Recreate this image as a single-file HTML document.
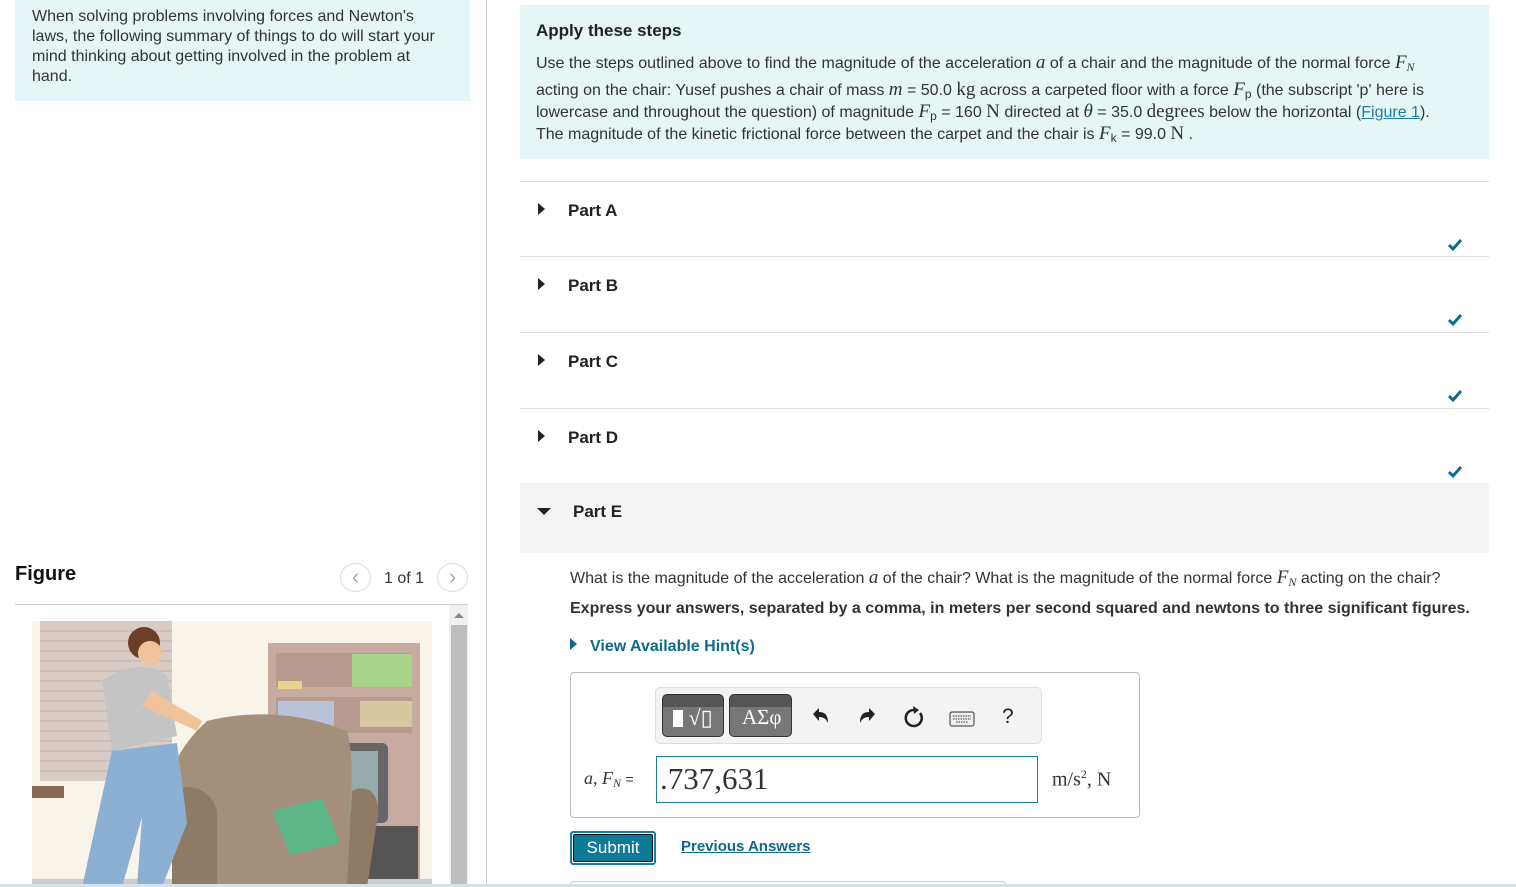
<!DOCTYPE html>
<html><head><style>
*{margin:0;padding:0;box-sizing:border-box}
body{width:1516px;height:887px;overflow:hidden;background:#fff;font-family:"Liberation Sans",Arial,sans-serif;color:#333;position:relative;font-size:16px}
.abs{position:absolute;white-space:nowrap}
.m{font-family:"Liberation Serif",serif;font-style:italic;font-size:19px}
.r{font-family:"Liberation Serif",serif;font-size:19px}
sub{font-size:12px;line-height:0;vertical-align:-3px}
.part{position:absolute;left:520px;width:969px;border-top:1px solid #ddd;height:76px}
.part b{position:absolute;left:48px;top:19px;font-size:17px;color:#222}
.tri{position:absolute;left:18px;top:21px;width:0;height:0;border-top:6px solid transparent;border-bottom:6px solid transparent;border-left:7px solid #222}
.chk{position:absolute;right:26px;top:56px}
.ln{position:absolute;left:536px;font-size:16px;line-height:20px;white-space:nowrap}
</style></head><body>
<div class="abs" style="left:15px;top:0;width:455px;height:101px;background:#e6f5f6"></div>
<div class="abs" style="left:32px;top:7px;width:420px;font-size:16px;line-height:20px;color:#333;white-space:normal">When solving problems involving forces and Newton's laws, the following summary of things to do will start your mind thinking about getting involved in the problem at hand.</div>
<div class="abs" style="left:486px;top:0;width:1px;height:887px;background:#ccc"></div>

<div class="abs" style="left:520px;top:5px;width:969px;height:154px;background:#e6f5f6"></div>
<div class="abs" style="left:536px;top:21px;font-size:17px;font-weight:bold;color:#222">Apply these steps</div>
<div class="ln" style="top:53px">Use the steps outlined above to find the magnitude of the acceleration <span class="m">a</span> of a chair and the magnitude of the normal force <span class="m">F<sub>N</sub></span></div>
<div class="ln" style="top:80px">acting on the chair: Yusef pushes a chair of mass <span class="m">m</span> = 50.0 <span class="r">kg</span> across a carpeted floor with a force <span class="m">F</span><sub>p</sub> (the subscript 'p' here is</div>
<div class="ln" style="top:102px">lowercase and throughout the question) of magnitude <span class="m">F</span><sub>p</sub> = 160 <span class="r">N</span> directed at <span class="m">θ</span> = 35.0 <span class="r">degrees</span> below the horizontal (<span style="color:#1a7ea0;text-decoration:underline">Figure 1</span>).</div>
<div class="ln" style="top:124px">The magnitude of the kinetic frictional force between the carpet and the chair is <span class="m">F</span><sub>k</sub> = 99.0 <span class="r">N</span> .</div>

<div class="part" style="top:181px"><div class="tri"></div><b>Part A</b><svg class="chk" width="16" height="14"><path d="M2 7l4 4 8-9" stroke="#0d6a8a" stroke-width="3" fill="none"/></svg></div>
<div class="part" style="top:256px"><div class="tri"></div><b>Part B</b><svg class="chk" width="16" height="14"><path d="M2 7l4 4 8-9" stroke="#0d6a8a" stroke-width="3" fill="none"/></svg></div>
<div class="part" style="top:332px"><div class="tri"></div><b>Part C</b><svg class="chk" width="16" height="14"><path d="M2 7l4 4 8-9" stroke="#0d6a8a" stroke-width="3" fill="none"/></svg></div>
<div class="part" style="top:408px"><div class="tri"></div><b>Part D</b><svg class="chk" width="16" height="14"><path d="M2 7l4 4 8-9" stroke="#0d6a8a" stroke-width="3" fill="none"/></svg></div>
<div class="abs" style="left:520px;top:483px;width:969px;height:70px;background:#f5f5f5"></div>
<div class="abs" style="left:537px;top:508px;width:0;height:0;border-left:7px solid transparent;border-right:7px solid transparent;border-top:7px solid #222"></div>
<div class="abs" style="left:573px;top:502px;font-size:17px;font-weight:bold;color:#222">Part E</div>

<div class="abs" style="left:570px;top:567px;font-size:16px">What is the magnitude of the acceleration <span class="m">a</span> of the chair? What is the magnitude of the normal force <span class="m">F<sub>N</sub></span> acting on the chair?</div>
<div class="abs" style="left:570px;top:600px;font-size:16px;font-weight:bold;color:#333">Express your answers, separated by a comma, in meters per second squared and newtons to three significant figures.</div>
<div class="abs" style="left:570px;top:638px;width:0;height:0;border-top:6px solid transparent;border-bottom:6px solid transparent;border-left:7px solid #0d6a8a"></div>
<div class="abs" style="left:590px;top:638px;font-size:16px;font-weight:bold;color:#0d6a8a">View Available Hint(s)</div>

<div class="abs" style="left:570px;top:672px;width:570px;height:146px;border:1px solid #bbb;border-radius:4px"></div>
<div class="abs" style="left:655px;top:687px;width:387px;height:57px;background:#f3f3f3;border:1px solid #ddd;border-radius:5px"></div>
<div class="abs" style="left:662px;top:694px;width:62px;height:43px;background:linear-gradient(#555 0,#555 12px,#777 12px);border:1px solid #333;border-radius:5px;color:#fff;font-family:'Liberation Serif',serif;font-size:22px;padding:10px 0 0 10px"><span style="display:inline-block;width:10px;height:17px;background:#fff;vertical-align:-2px"></span> √▯</div>
<div class="abs" style="left:729px;top:694px;width:63px;height:43px;background:linear-gradient(#555 0,#555 12px,#777 12px);border:1px solid #333;border-radius:5px;color:#fff;font-family:'Liberation Serif',serif;font-size:21px;padding:10px 0 0 12px">ΑΣφ</div>
<svg class="abs" style="left:810px;top:706px" width="20" height="20"><path d="M3 8l6-6v4c6 0 9 3 9 11c-2-4-4-6-9-6v4z" fill="#222"/></svg>
<svg class="abs" style="left:858px;top:706px" width="20" height="20"><path d="M17 8l-6-6v4c-6 0-9 3-9 11c2-4 4-6 9-6v4z" fill="#222"/></svg>
<svg class="abs" style="left:903px;top:706px" width="22" height="22"><path d="M17 7a8 8 0 1 1-6-3" stroke="#222" stroke-width="2.5" fill="none"/><path d="M10 0l6 4-5 4z" fill="#222"/></svg>
<svg class="abs" style="left:949px;top:711px" width="26" height="16"><rect x="1" y="1" width="24" height="14" rx="2" fill="#eee" stroke="#333"/><path d="M4 5h18M4 8h18M7 11h12" stroke="#333" stroke-dasharray="1.5 1"/></svg>
<div class="abs" style="left:1002px;top:705px;font-size:21px;color:#222">?</div>

<div class="abs" style="left:584px;top:768px;font-family:'Liberation Serif',serif;font-size:18px;color:#333"><i>a</i>, <i>F<sub>N</sub></i> <span style="font-family:'Liberation Sans';font-size:14px">=</span></div>
<div class="abs" style="left:656px;top:756px;width:382px;height:47px;border:1px solid #1a7ea0"></div>
<div class="abs" style="left:660px;top:761px;font-family:'Liberation Serif',serif;font-size:31px;color:#333">.737,631</div>
<div class="abs" style="left:1052px;top:767px;font-family:'Liberation Serif',serif;font-size:20px;color:#333">m/s<sup style="font-size:12px">2</sup>, N</div>

<div class="abs" style="left:570px;top:831px;width:86px;height:34px;border:2px solid #1a7ea0;border-radius:3px;padding:1px"><div style="width:100%;height:100%;background:#0d7a96;border:1px solid #111;border-radius:2px;color:#fff;font-size:17px;text-align:center;line-height:26px">Submit</div></div>
<div class="abs" style="left:681px;top:838px;font-size:15px;font-weight:bold;color:#0d6a8a;text-decoration:underline">Previous Answers</div>
<div class="abs" style="left:570px;top:881px;width:436px;height:6px;border:1px solid #ccc;border-bottom:none;border-radius:4px 4px 0 0"></div>

<div class="abs" style="left:15px;top:563px;font-size:20px;font-weight:bold;color:#111">Figure</div>
<div class="abs" style="left:340px;top:563px;width:31px;height:29px;border:1px solid #ddd;border-radius:50%;color:#aaa;text-align:center;line-height:26px;font-size:22px">‹</div>
<div class="abs" style="left:384px;top:570px;font-size:16px;color:#333">1 of 1</div>
<div class="abs" style="left:437px;top:563px;width:31px;height:29px;border:1px solid #ddd;border-radius:50%;color:#aaa;text-align:center;line-height:26px;font-size:22px">›</div>
<div class="abs" style="left:15px;top:604px;width:453px;height:1px;background:#ccc"></div>
<div class="abs" style="left:449px;top:605px;width:19px;height:282px;background:#f0f0f0"></div>
<div class="abs" style="left:451px;top:625px;width:16px;height:262px;background:#bdbdbd"></div>
<div class="abs" style="left:454px;top:613px;width:0;height:0;border-left:5px solid transparent;border-right:5px solid transparent;border-bottom:5px solid #888"></div>

<svg class="abs" style="left:32px;top:621px" width="400" height="266">
<rect width="400" height="266" fill="#f8f4ea"/>
<rect x="8" y="0" width="132" height="160" fill="#d9ccc6"/>
<g stroke="#c0b0aa" stroke-width="1"><path d="M8 10h132M8 20h132M8 30h132M8 40h132M8 50h132M8 60h132M8 70h132M8 80h132M8 90h132M8 100h132M8 110h132M8 120h132M8 130h132M8 140h132M8 150h132"/></g>
<rect x="236" y="22" width="152" height="244" fill="#c7aaa0"/>
<rect x="244" y="32" width="136" height="34" fill="#b89a90"/>
<rect x="244" y="76" width="136" height="36" fill="#b89a90"/>
<rect x="320" y="33" width="60" height="33" fill="#a9d28a"/>
<rect x="246" y="60" width="24" height="8" fill="#e7d38a"/>
<rect x="246" y="80" width="56" height="26" fill="#b9c3d8"/>
<rect x="328" y="80" width="52" height="26" fill="#d8c7a0"/>
<rect x="256" y="122" width="100" height="80" rx="6" fill="#666"/>
<rect x="266" y="130" width="80" height="62" fill="#9aa"/>
<rect x="326" y="205" width="60" height="55" fill="#555"/>
<rect x="0" y="165" width="32" height="12" fill="#8a6a55"/>
<rect x="0" y="258" width="400" height="8" fill="#ccc"/>
<path d="M175 100c40-10 90-10 140 10 10 40 0 80 5 100l0 56h-180l0-70c-10-20-5-60 35-96z" fill="#a48f7b"/>
<path d="M140 170c20-10 40 0 45 20l0 76h-45z M320 170c20-10 30 10 25 30l-10 66h-20z" fill="#8f7a66"/>
<path d="M240 190l50-13 18 45-50 12z" fill="#5fb58a"/>
<circle cx="112" cy="22" r="16" fill="#6b4028"/>
<circle cx="118" cy="32" r="12" fill="#f0c39a"/>
<path d="M70 60c20-15 50-20 65-5l10 60-65 15z" fill="#c4c4c4"/>
<path d="M120 70l50 30 -5 10-55-25z" fill="#f0c39a"/>
<path d="M80 130l65-8 10 80-25 64h-25l5-70-20 70h-40z" fill="#8cb0d4"/>
</svg>
<div class="abs" style="left:0;top:884px;width:1516px;height:3px;background:#d4e3ea"></div>
</body></html>
